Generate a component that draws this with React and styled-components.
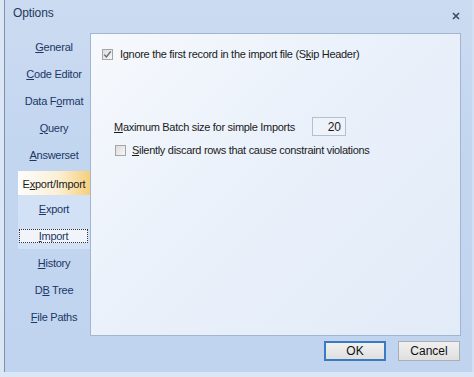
import React from 'react'
import styled, { createGlobalStyle } from 'styled-components'

const Global = createGlobalStyle`
  html, body {
    margin: 0;
    padding: 0;
    background: #dce7f5;
    font-family: "Liberation Sans", Arial, sans-serif;
  }
`

const Window = styled.div`
  margin-left: 4px;
  width: 470px;
  height: 372px;
  border-left: 1px solid #7f90a8;
  border-right: 2px solid #d3e0f3;
  background: linear-gradient(to bottom, #cbdbf1 0%, #c3d6f0 40%, #c1d4ef 100%);
  display: flex;
  flex-direction: column;
  box-sizing: border-box;
`

const TitleBar = styled.div`
  height: 33px;
  display: flex;
  align-items: flex-start;
  justify-content: space-between;
  padding: 6px 12px 0 8px;
  box-sizing: border-box;
`

const Title = styled.span`
  font-size: 12px;
  color: #1e395b;
  letter-spacing: -0.1px;
`

const Close = styled.span`
  margin-top: 6px;
  display: flex;
`

const Body = styled.div`
  display: flex;
  height: 303px;
`

const Nav = styled.div`
  width: 85px;
  padding-left: 13px;
  box-sizing: border-box;
  display: flex;
  flex-direction: column;
`

const NavItem = styled.div`
  display: flex;
  align-items: center;
  justify-content: center;
  font-size: 11px;
  letter-spacing: -0.25px;
  color: ${p => (p.selected ? '#1c1c1c' : '#1b3766')};
  background: ${p =>
    p.selected ? 'linear-gradient(to right, #fdfdfd 0%, #fbf0d6 55%, #f5cf7c 100%)' : 'transparent'};
  margin: ${p => (p.selected ? '3px 0 -1px' : '0')};
  height: ${p => (p.selected ? '25px' : '27px')};
  flex-shrink: 0;
  u {
    text-decoration: underline;
  }
`

const SubGroup = styled.div`
  background: #d2e1f5;
  display: flex;
  flex-direction: column;
`

const Focus = styled.span`
  width: 69px;
  height: 14px;
  border: 1px dotted #333;
  background: #f1f5fb;
  display: flex;
  align-items: center;
  justify-content: center;
  box-sizing: border-box;
  margin-left: -1px;
`

const Panel = styled.div`
  width: 371px;
  border: 1px solid #a3b6d1;
  background: linear-gradient(135deg, #f6f9fd 0%, #e9f0fa 50%, #e2ebf8 100%);
  box-sizing: border-box;
  display: flex;
  flex-direction: column;
  font-size: 11px;
  letter-spacing: -0.3px;
  color: #1a1a1a;
`

const CheckRow = styled.label`
  display: flex;
  align-items: center;
  gap: ${p => p.gap || 7}px;
  padding-left: ${p => p.indent}px;
  margin-top: ${p => p.top}px;
  height: 14px;
`

const Box = styled.span`
  width: 11px;
  height: 11px;
  border: 1px solid #a5a5a5;
  background: linear-gradient(135deg, #dcdcdc, #f7f7f7);
  box-sizing: border-box;
  display: flex;
  align-items: center;
  justify-content: center;
`

const FieldRow = styled.div`
  display: flex;
  align-items: center;
  padding-left: 23px;
  margin-top: ${p => p.top}px;
  height: 19px;
`

const Label = styled.span`
  width: 198px;
`

const NumberBox = styled.span`
  width: 34px;
  height: 19px;
  border: 1px solid #b4bfcf;
  background: #eef3fa;
  box-sizing: border-box;
  display: flex;
  align-items: center;
  justify-content: flex-end;
  padding-right: 4px;
  font-size: 12px;
  letter-spacing: 0;
`

const Footer = styled.div`
  display: flex;
  justify-content: flex-end;
  gap: 12px;
  padding: 5px 12px 0 0;
`

const Button = styled.button`
  width: 62px;
  height: 20px;
  font-family: "Liberation Sans", Arial, sans-serif;
  font-size: 12px;
  color: #111;
  background: linear-gradient(to bottom, #f0f0f0 0%, #e8e8e8 50%, #dfdfdf 100%);
  border: ${p => (p.primary ? '2px solid #3a7bbf' : '1px solid #adadad')};
  box-sizing: border-box;
  padding: 0;
`

const Check = () => (
  <svg width="9" height="9" viewBox="0 0 9 9">
    <path d="M1.2 4.6 L3.4 7 L7.8 1.4" fill="none" stroke="#606a78" strokeWidth="1.4" />
  </svg>
)

const items = [
  ['G', 'eneral'],
  ['C', 'ode Editor'],
  ['Data F', 'o', 'rmat'],
  ['Q', 'uery'],
  ['A', 'nswerset'],
]

const after = [
  ['H', 'istory'],
  ['D', 'B', ' Tree'],
  ['F', 'ile Paths'],
]

const Mnemonic = ({ parts }) =>
  parts.length === 2 ? (
    <span><u>{parts[0]}</u>{parts[1]}</span>
  ) : (
    <span>{parts[0]}<u>{parts[1]}</u>{parts[2]}</span>
  )

export default function App() {
  return (
    <>
      <Global />
      <Window>
        <TitleBar>
          <Title>Options</Title>
          <Close>
            <svg width="8" height="8" viewBox="0 0 8 8">
              <path d="M1 1 L7 7 M7 1 L1 7" stroke="#3d4a5c" strokeWidth="1.6" />
            </svg>
          </Close>
        </TitleBar>
        <Body>
          <Nav>
            {items.map((p, i) => (
              <NavItem key={i}><Mnemonic parts={p} /></NavItem>
            ))}
            <NavItem selected>
              <span>E<u>x</u>port/Import</span>
            </NavItem>
            <SubGroup>
              <NavItem><span><u>E</u>xport</span></NavItem>
              <NavItem>
                <Focus><span><u>I</u>mport</span></Focus>
              </NavItem>
            </SubGroup>
            {after.map((p, i) => (
              <NavItem key={i}><Mnemonic parts={p} /></NavItem>
            ))}
          </Nav>
          <Panel>
            <CheckRow indent={11} top={13} gap={7}>
              <Box><Check /></Box>
              <span>Ignore the first record in the import file (S<u>k</u>ip Header)</span>
            </CheckRow>
            <FieldRow top={56}>
              <Label><u>M</u>aximum Batch size for simple Imports</Label>
              <NumberBox>20</NumberBox>
            </FieldRow>
            <CheckRow indent={24} top={7} gap={6}>
              <Box />
              <span><u>S</u>ilently discard rows that cause constraint violations</span>
            </CheckRow>
          </Panel>
        </Body>
        <Footer>
          <Button primary>OK</Button>
          <Button>Cancel</Button>
        </Footer>
      </Window>
    </>
  )
}
